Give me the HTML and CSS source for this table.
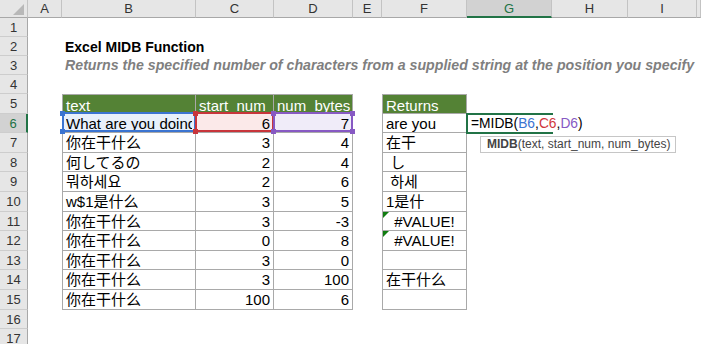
FILE: index.html
```html
<!DOCTYPE html>
<html lang="en">

<head>
    <meta charset="UTF-8">
    <title>Excel MIDB Function</title>
    <link rel="stylesheet" href="styles.css">
</head>

<body>
    <div class="sheet">
        <div class="row head">
            <div class="corner"></div>
            <div class="ch">A</div>
            <div class="ch">B</div>
            <div class="ch">C</div>
            <div class="ch">D</div>
            <div class="ch">E</div>
            <div class="ch">F</div>
            <div class="ch on">G</div>
            <div class="ch">H</div>
            <div class="ch">I</div>
            <div class="ch"></div>
        </div>

        <div class="row short"><div class="rh">1</div></div>
        <div class="row short">
            <div class="rh">2</div>
            <div class="c col-b title">Excel MIDB Function</div>
        </div>
        <div class="row short">
            <div class="rh">3</div>
            <div class="c col-b sub">Returns the specified number of characters from a supplied string at the position you specify</div>
        </div>
        <div class="row short"><div class="rh">4</div></div>

        <div class="row">
            <div class="rh">5</div>
            <div class="c col-b t first th">text</div>
            <div class="c col-c t th">start_num</div>
            <div class="c col-d t th">num_bytes</div>
            <div class="c col-f t first th">Returns</div>
        </div>

        <!-- row 6: references of the formula being edited -->
        <div class="row">
            <div class="rh on">6</div>
            <div class="c col-b t first hl blue"><span class="clip">What are you doing</span><i class="hd tl"></i><i class="hd bl"></i><i class="hd tr"></i><i class="hd br"></i></div>
            <div class="c col-c t num hl red">6<i class="hd tl"></i><i class="hd bl"></i><i class="hd tr"></i><i class="hd br"></i></div>
            <div class="c col-d t num hl purple">7<i class="hd tl"></i><i class="hd bl"></i><i class="hd tr"></i><i class="hd br"></i></div>
            <div class="c col-f t first">are you</div>
            <div class="c col-g active">=MIDB(<span class="ref-b">B6</span>,<span class="ref-c">C6</span>,<span class="ref-d">D6</span>)<div class="tip"><b>MIDB</b>(text, start_num, num_bytes)</div></div>
        </div>

        <div class="row">
            <div class="rh">7</div>
            <div class="c col-b t first">你在干什么</div>
            <div class="c col-c t num">3</div>
            <div class="c col-d t num">4</div>
            <div class="c col-f t first">在干</div>
        </div>
        <div class="row">
            <div class="rh">8</div>
            <div class="c col-b t first">何してるの</div>
            <div class="c col-c t num">2</div>
            <div class="c col-d t num">4</div>
            <div class="c col-f t first"> し</div>
        </div>
        <div class="row">
            <div class="rh">9</div>
            <div class="c col-b t first">뭐하세요</div>
            <div class="c col-c t num">2</div>
            <div class="c col-d t num">6</div>
            <div class="c col-f t first"> 하세</div>
        </div>
        <div class="row">
            <div class="rh">10</div>
            <div class="c col-b t first">w$1是什么</div>
            <div class="c col-c t num">3</div>
            <div class="c col-d t num">5</div>
            <div class="c col-f t first">1是什</div>
        </div>
        <div class="row">
            <div class="rh">11</div>
            <div class="c col-b t first">你在干什么</div>
            <div class="c col-c t num">3</div>
            <div class="c col-d t num">-3</div>
            <div class="c col-f t first mid err">#VALUE!</div>
        </div>
        <div class="row">
            <div class="rh">12</div>
            <div class="c col-b t first">你在干什么</div>
            <div class="c col-c t num">0</div>
            <div class="c col-d t num">8</div>
            <div class="c col-f t first mid err">#VALUE!</div>
        </div>
        <div class="row">
            <div class="rh">13</div>
            <div class="c col-b t first">你在干什么</div>
            <div class="c col-c t num">3</div>
            <div class="c col-d t num">0</div>
            <div class="c col-f t first"></div>
        </div>
        <div class="row">
            <div class="rh">14</div>
            <div class="c col-b t first">你在干什么</div>
            <div class="c col-c t num">3</div>
            <div class="c col-d t num">100</div>
            <div class="c col-f t first">在干什么</div>
        </div>
        <div class="row">
            <div class="rh">15</div>
            <div class="c col-b t first">你在干什么</div>
            <div class="c col-c t num">100</div>
            <div class="c col-d t num">6</div>
            <div class="c col-f t first"></div>
        </div>
        <div class="row"><div class="rh">16</div></div>
        <div class="row"><div class="rh">17</div></div>
    </div>
</body>

</html>
```

FILE: styles.css
```css
html,
body {
    margin: 0;
    padding: 0;
}

body {
    width: 701px;
    height: 344px;
    overflow: hidden;
    background: #fff;
    color: #000;
    font-family: 'Liberation Sans', 'Noto Sans CJK SC', Arial, sans-serif;
}

.sheet {
    width: 701px;
}

.row {
    display: grid;
    grid-template-columns: 28px 34px 134px 78px 79px 29px 85px 85px 76px 69px 1fr;
    grid-template-rows: 100%;
    height: 19.6px;
}

.row.short {
    height: 19px;
}

.row.head {
    height: 18px;
}

/* headers */
.corner,
.ch,
.rh {
    box-sizing: border-box;
    background: #e6e6e6;
    color: #333;
    font-size: 13px;
    text-align: center;
}

.corner {
    position: relative;
    border-right: 1px solid #c3c3c3;
    border-bottom: 1px solid #a8a8a8;
}

.corner::after {
    content: "";
    position: absolute;
    right: 3px;
    bottom: 2px;
    width: 0;
    height: 0;
    border-left: 11px solid transparent;
    border-bottom: 11px solid #b8b8b8;
}

.ch {
    line-height: 17px;
    border-right: 1px solid #c3c3c3;
    border-bottom: 1px solid #a8a8a8;
}

.ch.on {
    background: #d2d2d2;
    color: #217346;
    border-bottom: 2px solid #217346;
}

.rh {
    grid-column: 1;
    line-height: 19px;
    border-right: 1px solid #a8a8a8;
    border-bottom: 1px solid #cdcdcd;
}

.rh.on {
    background: #d2d2d2;
    color: #217346;
    border-right: 2px solid #217346;
}

/* cells */
.c {
    box-sizing: border-box;
    padding: 0 3px;
    font-size: 15px;
    line-height: 19px;
    white-space: pre;
    overflow: hidden;
}

.col-b { grid-column: 3; }
.col-c { grid-column: 4; }
.col-d { grid-column: 5; }
.col-f { grid-column: 7; }
.col-g { grid-column: 8; }

.num {
    text-align: right;
}

.mid {
    text-align: center;
}

.title {
    grid-column: 3 / -1;
    font-size: 14px;
    font-weight: bold;
    padding-top: 1px;
}

.sub {
    grid-column: 3 / -1;
    font-size: 14.2px;
    font-weight: bold;
    font-style: italic;
    color: #7f7f7f;
}

.t {
    border-right: 1px solid #a9a9a9;
    border-bottom: 1px solid #a9a9a9;
}

.t.first {
    border-left: 1px solid #a9a9a9;
}

.th {
    background: #548235;
    color: #fff;
    border-top: 1px solid #a9a9a9;
    line-height: 18px;
    padding-top: 2px;
}

/* range highlights of the formula references */
.hl {
    position: relative;
    overflow: visible;
    white-space: nowrap;
}

.hl::before {
    content: "";
    position: absolute;
    left: -1px;
    top: -2px;
    right: -1px;
    bottom: 0;
    border: 2px solid var(--hc);
}

.hl .clip {
    display: block;
    overflow: hidden;
}

.blue {
    --hc: #3b74d1;
    background: #e8f0fb;
}

.red {
    --hc: #c8353b;
    background: #fbe9e9;
}

.purple {
    --hc: #8759c3;
    background: #f0ecf9;
}

.hd {
    position: absolute;
    width: 5px;
    height: 5px;
    background: var(--hc);
}

.hd.tl { left: -3px; top: -3px; }
.hd.bl { left: -3px; bottom: -2px; }
.hd.tr { right: -3px; top: -3px; }
.hd.br { right: -3px; bottom: -2px; }

/* active cell with formula */
.active {
    position: relative;
    overflow: visible;
    white-space: nowrap;
    padding-left: 4px;
    font-size: 13.8px;
}

.active::before {
    content: "";
    position: absolute;
    left: -1px;
    top: -1px;
    right: -1px;
    bottom: -1px;
    border: 2px solid #217346;
    border-right: none;
}

.ref-b { color: #3b74d1; }
.ref-c { color: #d0363c; }
.ref-d { color: #8759c3; }

.tip {
    position: absolute;
    left: 13px;
    top: 22px;
    z-index: 5;
    width: 196px;
    height: 17px;
    box-sizing: border-box;
    padding-left: 6px;
    border: 1px solid #c6c6c6;
    background: #fff;
    color: #444;
    font-size: 12px;
    line-height: 15px;
    white-space: nowrap;
}

/* error indicator */
.err {
    position: relative;
}

.err::before {
    content: "";
    position: absolute;
    left: 0;
    top: 0;
    width: 0;
    height: 0;
    border-top: 6px solid #107c10;
    border-right: 6px solid transparent;
}
```
